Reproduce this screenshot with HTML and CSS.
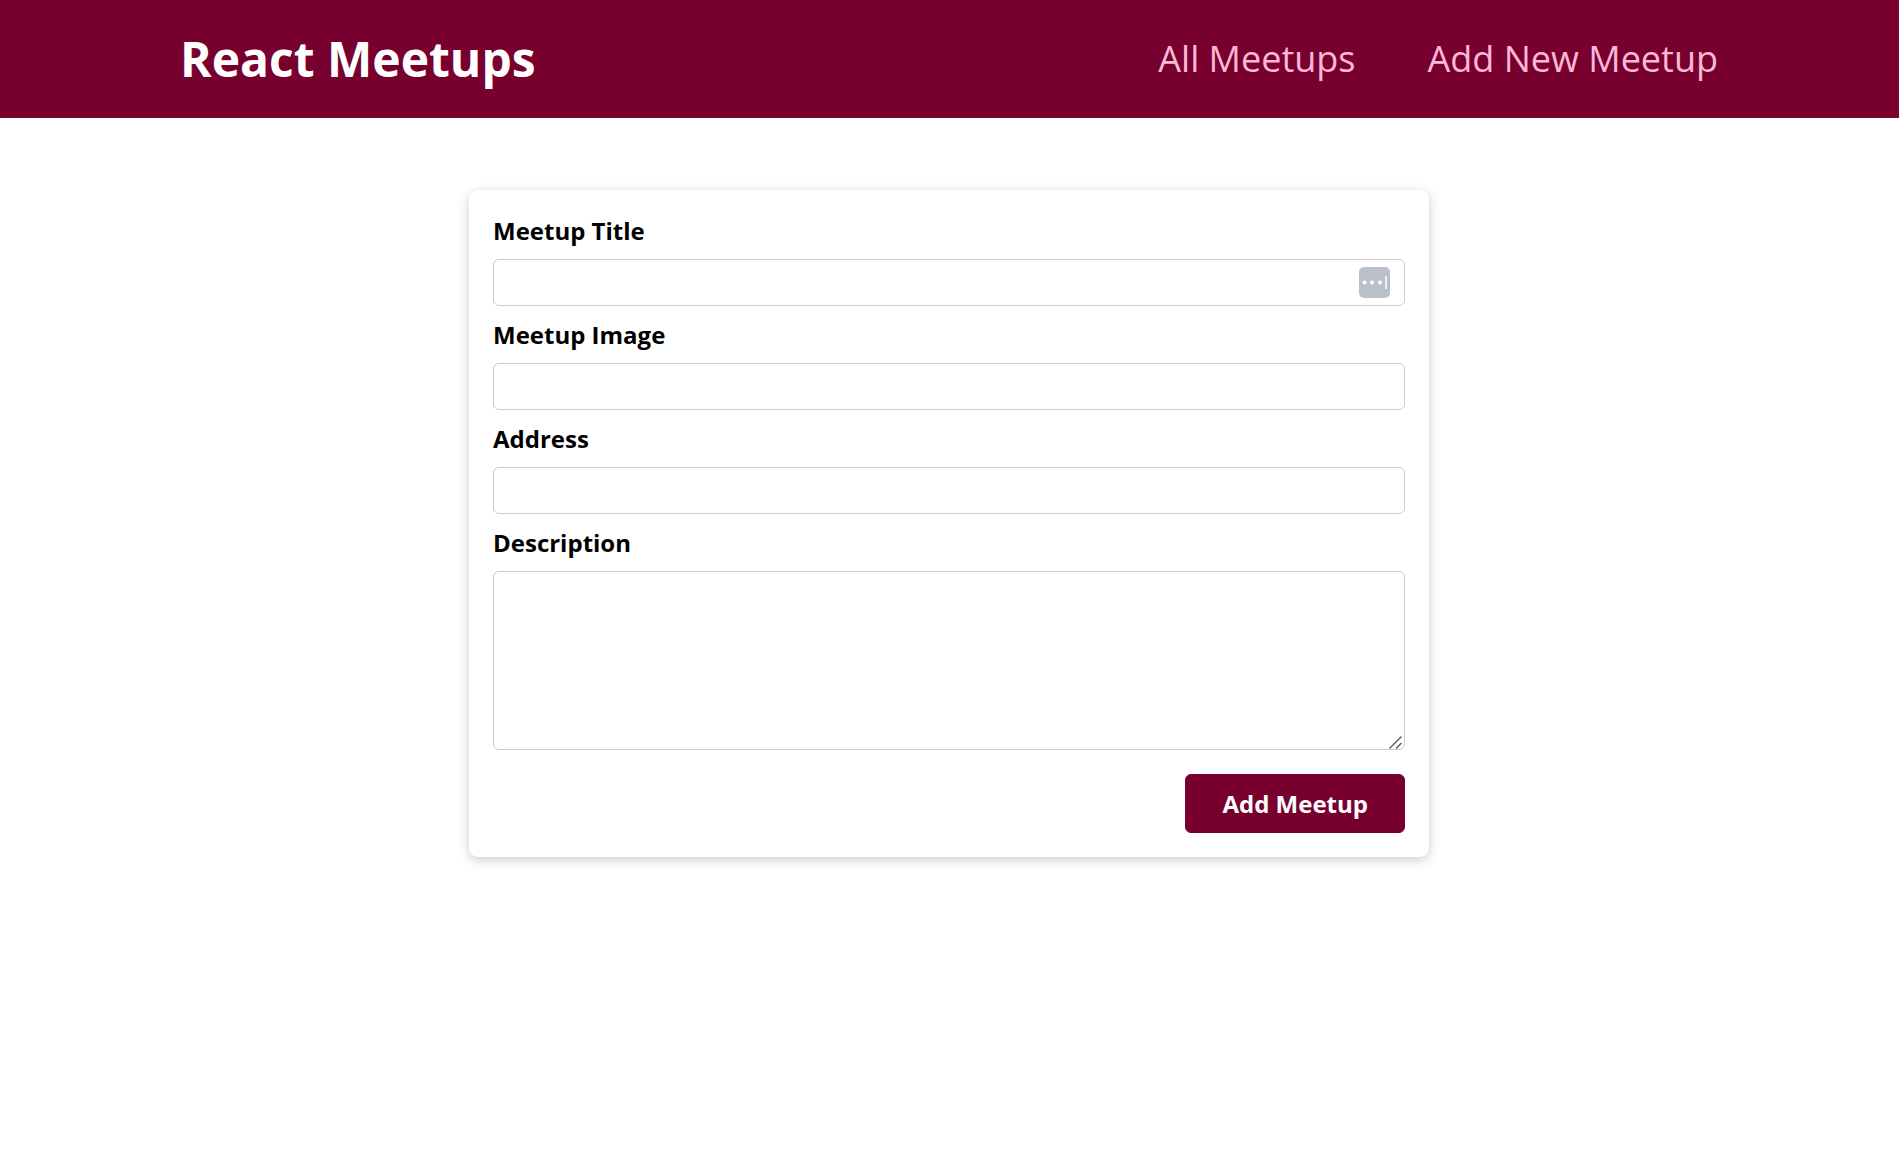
FILE: index.html
```html
<!DOCTYPE html>
<html lang="en">
<head>
<meta charset="utf-8">
<title>React Meetups</title>
<link rel="stylesheet" href="styles.css">
</head>
<body>
<header class="header">
  <div class="logo">React Meetups</div>
  <nav>
    <ul class="nav-list">
      <li><a href="#" class="nav-link">All Meetups</a></li>
      <li><a href="#" class="nav-link">Add New Meetup</a></li>
    </ul>
  </nav>
</header>
<main class="main">
  <form class="card">
    <div class="control">
      <label for="title">Meetup Title</label>
      <div class="field">
        <input id="title" type="text">
        <svg class="pw-icon" viewBox="0 0 31 31" aria-hidden="true">
          <rect width="31" height="31" rx="5" fill="#b9c0ca"/>
          <circle cx="5.5" cy="15.5" r="2" fill="#fff"/>
          <circle cx="13" cy="15.5" r="2" fill="#fff"/>
          <circle cx="21" cy="15.5" r="2" fill="#fff"/>
          <rect x="26.3" y="9" width="1.5" height="13" fill="#fff"/>
        </svg>
      </div>
    </div>
    <div class="control">
      <label for="image">Meetup Image</label>
      <div class="field"><input id="image" type="url"></div>
    </div>
    <div class="control">
      <label for="address">Address</label>
      <div class="field"><input id="address" type="text"></div>
    </div>
    <div class="control">
      <label for="description">Description</label>
      <div class="field">
        <textarea id="description"></textarea>
        <svg class="grip" viewBox="0 0 13 13" aria-hidden="true">
          <path d="M0.5 12.5 L12.5 0.5 M7 12.5 L12.5 7" stroke="#555" stroke-width="1.3" fill="none"/>
        </svg>
      </div>
    </div>
    <div class="actions">
      <button type="button" class="submit">Add Meetup</button>
    </div>
  </form>
</main>
</body>
</html>
```

FILE: styles.css
```css
* {
  box-sizing: border-box;
}

html, body {
  margin: 0;
  padding: 0;
  background: #fff;
  font-family: "Open Sans", "Noto Sans", sans-serif;
}

.header {
  height: 118px;
  padding: 0 181px 2px 180px;
  background: #77002e;
  display: flex;
  align-items: center;
  justify-content: space-between;
}

.logo {
  font-size: 48px;
  font-weight: 700;
  color: #fff;
}

.nav-list {
  list-style: none;
  margin: 0;
  padding: 0;
  display: flex;
  gap: 72px;
}

.nav-link {
  font-size: 36px;
  color: #fcb8d6;
  text-decoration: none;
}

.main {
  width: 960px;
  margin: 72px 0 24px 469px;
}

.card {
  background: #fff;
  border-radius: 9px;
  box-shadow: 0 3px 12px rgba(0, 0, 0, 0.2);
  padding: 24px;
}

.control {
  margin-bottom: 12px;
}

.control label {
  display: block;
  font-size: 24px;
  line-height: 33px;
  font-weight: 700;
  color: #000;
  margin-bottom: 12px;
}

.field {
  position: relative;
  display: flex;
}

.field input,
.field textarea {
  display: block;
  width: 100%;
  border: 1px solid #ccc;
  border-radius: 6px;
  background: #fff;
  font: inherit;
  outline: none;
  padding: 6px;
}

.field input {
  height: 47px;
}

.field textarea {
  height: 179px;
  resize: none;
}

.pw-icon {
  position: absolute;
  right: 15px;
  top: 8px;
  width: 31px;
  height: 31px;
}

.grip {
  position: absolute;
  right: 3px;
  bottom: 1px;
  width: 13px;
  height: 13px;
}

.actions {
  display: flex;
  justify-content: flex-end;
  margin-top: 24px;
}

.submit {
  font: inherit;
  font-size: 24px;
  font-weight: 700;
  line-height: 33px;
  color: #fff;
  background: #77002e;
  border: 1px solid #77002e;
  border-radius: 6px;
  padding: 12px 36px;
  cursor: pointer;
}
```
